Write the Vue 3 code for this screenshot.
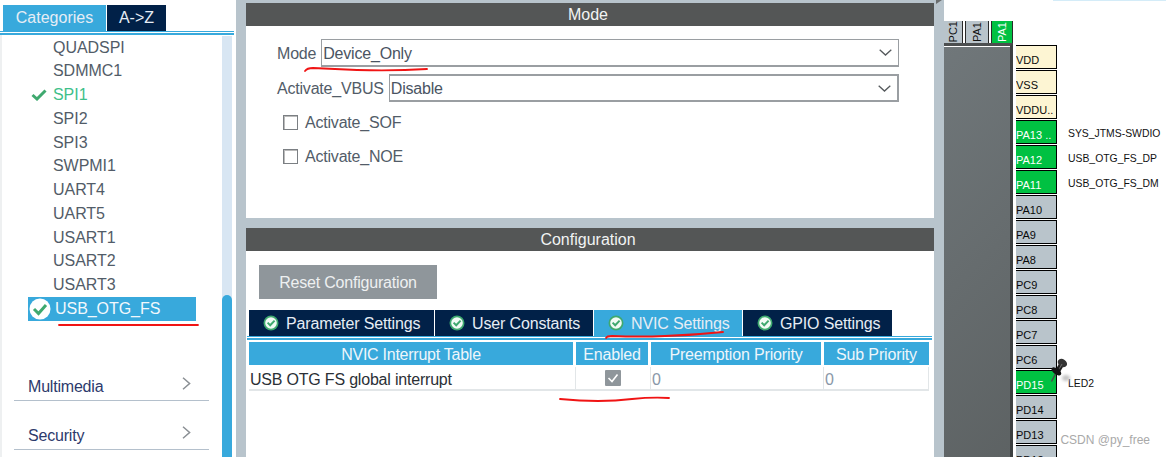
<script setup>
const items = [
  { name: 'QUADSPI' }, { name: 'SDMMC1' }, { name: 'SPI1', state: 'ok' }, { name: 'SPI2' }, { name: 'SPI3' },
  { name: 'SWPMI1' }, { name: 'UART4' }, { name: 'UART5' }, { name: 'USART1' }, { name: 'USART2' }, { name: 'USART3' },
]
const groups = ['Multimedia', 'Security']
const tabs = [
  { name: 'Parameter Settings', w: 185 },
  { name: 'User Constants', w: 158 },
  { name: 'NVIC Settings', w: 148, active: true },
  { name: 'GPIO Settings', w: 149 },
]
const topPins = [
  { name: 'PC1', w: 19 }, { name: 'PA1', w: 25 }, { name: 'PA1', w: 22, on: true },
]
const pins = [
  { n: 'VDD', k: 'pwr' }, { n: 'VSS', k: 'pwr' }, { n: 'VDDU..', k: 'pwr' },
  { n: 'PA13 ..', k: 'on', l: 'SYS_JTMS-SWDIO' }, { n: 'PA12', k: 'on', l: 'USB_OTG_FS_DP' }, { n: 'PA11', k: 'on', l: 'USB_OTG_FS_DM' },
  { n: 'PA10' }, { n: 'PA9' }, { n: 'PA8' }, { n: 'PC9' }, { n: 'PC8' }, { n: 'PC7' }, { n: 'PC6' },
  { n: 'PD15', k: 'on', l: 'LED2' }, { n: 'PD14' }, { n: 'PD13' }, { n: 'PD12', k: 'cut' },
]
</script>

<template>
  <div class="page">
    <aside class="side">
      <div class="side-tabs">
        <div class="stab active">Categories</div>
        <div class="stab">A-&gt;Z</div>
      </div>
      <div class="rule side-rule"></div>
      <div class="side-body">
        <div class="side-list">
          <div v-for="it in items" :key="it.name" class="item" :class="{ ok: it.state }">
            <svg v-if="it.state" class="tick" viewBox="0 0 16 12" width="16" height="12"><path d="M1.5 6 L6 10 L14.5 1.5" fill="none" stroke="#3fa96f" stroke-width="3"/></svg>
            {{ it.name }}
          </div>
          <div class="item selected">
            <svg class="sel-ico" viewBox="0 0 22 22" width="22" height="22"><circle cx="11" cy="11" r="10.5" fill="#fff"/><path d="M5 11 L9.5 15.5 L17 7" fill="none" stroke="#3fa96f" stroke-width="3"/></svg>
            <span>USB_OTG_FS</span>
          </div>
          <div v-for="g in groups" :key="g" class="group">
            <span>{{ g }}</span>
            <svg viewBox="0 0 9 13" width="9" height="13"><path d="M1 0.8 L7.6 6.5 L1 12.2" fill="none" stroke="#8a8f94" stroke-width="1.5"/></svg>
          </div>
        </div>
        <div class="scroll"><div class="thumb"></div></div>
      </div>
    </aside>

    <main class="center">
      <section class="panel mode">
        <header class="phead">Mode</header>
        <div class="mode-body">
          <div class="frow">
            <label>Mode</label>
            <div class="select thin"><span>Device_Only</span>
              <svg viewBox="0 0 13 7" width="13" height="7"><path d="M0.7 0.7 L6.5 6 L12.3 0.7" fill="none" stroke="#55595c" stroke-width="1.3"/></svg>
            </div>
          </div>
          <div class="frow">
            <label>Activate_VBUS</label>
            <div class="select"><span>Disable</span>
              <svg viewBox="0 0 13 7" width="13" height="7"><path d="M0.7 0.7 L6.5 6 L12.3 0.7" fill="none" stroke="#55595c" stroke-width="1.3"/></svg>
            </div>
          </div>
          <div class="checks">
            <div class="check"><i></i><span>Activate_SOF</span></div>
            <div class="check"><i></i><span>Activate_NOE</span></div>
          </div>
        </div>
      </section>

      <section class="panel config">
        <header class="phead">Configuration</header>
        <div class="config-body">
          <button class="reset">Reset Configuration</button>
          <div class="tabs">
            <div v-for="t in tabs" :key="t.name" class="tab" :class="{ active: t.active }" :style="{ width: t.w + 'px' }">
              <svg viewBox="0 0 16 16" width="16" height="16"><circle cx="8" cy="8" r="7.5" fill="#3fa96f"/><circle cx="8" cy="8" r="5.8" fill="#f2fbf5"/><path d="M4.6 7.6 L7.2 10.2 L11.6 5.6" fill="none" stroke="#3fa96f" stroke-width="2"/></svg>
              <span>{{ t.name }}</span>
            </div>
          </div>
          <div class="rule cfg-rule"></div>
          <div class="table">
            <div class="cell th wide">NVIC Interrupt Table</div>
            <div class="cell th">Enabled</div>
            <div class="cell th">Preemption Priority</div>
            <div class="cell th">Sub Priority</div>
            <div class="cell td name">USB OTG FS global interrupt</div>
            <div class="cell td mid"><span class="cb"><svg viewBox="0 0 16 16" width="16" height="16"><path d="M3.5 8 L7 11.5 L12.5 4.5" fill="none" stroke="#fff" stroke-width="1.6"/></svg></span></div>
            <div class="cell td num">0</div>
            <div class="cell td num last">0</div>
          </div>
        </div>
      </section>
    </main>

    <section class="canvas">
      <div class="top-pins">
        <div v-for="(p, i) in topPins" :key="i" class="tpin" :class="{ on: p.on }" :style="{ width: p.w + 'px' }"><span>{{ p.name }}</span></div>
      </div>
      <div class="chip-row">
        <div class="chip"></div>
        <div class="pins">
          <div v-for="p in pins" :key="p.n" class="pin-row">
            <div class="pin" :class="p.k">{{ p.n }}</div>
            <div v-if="p.l" class="pin-label">{{ p.l }}</div>
          </div>
        </div>
      </div>
      <svg class="pushpin" viewBox="0 0 26 26" width="26" height="26">
        <defs><filter id="soft" x="-60%" y="-60%" width="220%" height="220%"><feGaussianBlur stdDeviation="1.8"/></filter></defs>
        <ellipse cx="16" cy="20" rx="4" ry="3" fill="#c4c4c4" filter="url(#soft)"/>
        <path d="M1.5 23.5 L6 15" stroke="#4a4a4a" stroke-width="1.5"/>
        <path d="M11.5 6.5 L8 12.5" stroke="#1d1d1d" stroke-width="5"/>
        <ellipse cx="6.4" cy="13.4" rx="5.6" ry="3" transform="rotate(35 6.4 13.4)" fill="#141414"/>
        <ellipse cx="12.4" cy="5" rx="5" ry="3.8" transform="rotate(35 12.4 5)" fill="#333"/>
        <path d="M9.5 10.5 L12 6" stroke="#6f6f6f" stroke-width="1"/>
      </svg>
      <div class="mark">CSDN @py_free</div>
      <div class="top-line"></div>
    </section>

    <svg class="ink" viewBox="0 0 1166 457" width="1166" height="457">
      <polygon points="936,0 942,0 936,4" fill="#6a6d6e"/>
      <g fill="none" stroke="#f01414" stroke-width="1.8" stroke-linecap="round">
        <path d="M305 71 Q307 68 313 68 Q335 69 357 70 Q395 71 427 69"/>
        <path d="M59 325 L198 325"/>
        <path d="M606 338 Q607 336 612 336 Q640 337 665 336 Q695 335 723 332"/>
        <path d="M560 399 Q600 403 632 399 Q652 397 669 398"/>
      </g>
    </svg>
  </div>
</template>

<style>
html, body { margin: 0; background: #fff; overflow: hidden; }
</style>

<style scoped>
.page {
  position: relative;
  display: flex;
  width: 1166px;
  height: 457px;
  overflow: hidden;
  background: #fff;
  font-family: "Liberation Sans", Arial, sans-serif;
  font-size: 16px;
  letter-spacing: -0.2px;
  color: #525c68;
}
.side {
  width: 236px;
  flex: none;
  padding-top: 5px;
  box-sizing: border-box;
}
.side-tabs { display: flex; gap: 1px; padding-left: 3px; height: 26px; }
.stab {
  width: 59px;
  background: #012148;
  color: #e6edf5;
  font-size: 16px;
  letter-spacing: 0;
  line-height: 26px;
  text-align: center;
}
.stab.active { width: 103px; background: #38a9dc; }
.side-rule { margin-right: 2px; }
.rule {
  height: 4px;
  background: linear-gradient(#38a9dc 0 1px, #fff 1px 2px, #38a9dc 2px 4px);
}
.side-body { display: flex; height: 422px; overflow: hidden; border-left: 2px solid #eef0f1; }
.side-list { width: 220px; padding-top: 0.5px; flex: none; }
.item {
  position: relative;
  height: 23.75px;
  line-height: 23.75px;
  padding-left: 51px;
  font-size: 16px;
  letter-spacing: -0.05px;
  white-space: nowrap;
}
.item.ok { color: #3ec08a; }
.tick { position: absolute; left: 29px; top: 6px; }
.selected {
  display: flex;
  align-items: center;
  gap: 4px;
  width: 168px;
  height: 24px;
  margin-left: 26px;
  padding-left: 1px;
  box-sizing: border-box;
  background: #38a9dc;
  color: #f2f8fc;
}
.sel-ico { flex: none; }
.group {
  display: flex;
  justify-content: space-between;
  align-items: flex-start;
  width: 195px;
  height: 31px;
  margin-left: 12px;
  border-bottom: 1px solid #b4c0cc;
  padding: 8px 18px 0 14px;
  box-sizing: border-box;
  color: #2d3a6c;
  font-size: 16px;
  line-height: 18px;
  margin-top: 18px;
}
.group svg { margin-top: -1px; }
.selected + .group { margin-top: 49px; }
.scroll { width: 10px; background: #d8e6f3; padding-top: 259px; margin-top: 1px; }
.thumb { height: 170px; background: #38a9dc; border-radius: 5px 5px 0 0; }

.center {
  width: 708px;
  flex: none;
  box-sizing: border-box;
  padding: 3px 0 0;
  border-left: 10px solid #b8c4cc;
  border-right: 10px solid #b8c4cc;
  background: #b8c4cc;
  display: flex;
  flex-direction: column;
  gap: 10px;
}
.panel { background: #fff; }
.phead {
  height: 23px;
  padding-right: 4px;
  background: #545656;
  color: #f1f3f3;
  text-align: center;
  line-height: 23px;
  font-size: 16px;
  letter-spacing: 0;
}
.mode { height: 215px; }
.mode-body { padding: 13px 35px 0 31px; }
.frow { display: flex; align-items: stretch; gap: 5px; height: 28px; margin-bottom: 7px; }
.frow label { line-height: 30px; }
.select {
  flex: 1;
  display: flex;
  align-items: center;
  justify-content: space-between;
  padding: 0 6px 0 1px;
  border: 2px solid #9a9ea2;
  border-left-width: 1px;
  box-sizing: border-box;
  color: #4a5462;
}
.select span { padding-top: 2px; }
.select.thin { border-width: 1px; border-bottom-width: 2px; }
.checks { margin-top: -4px; }
.check { display: flex; align-items: center; gap: 7px; height: 34px; padding-left: 6px; }
.check span { padding-top: 2px; }
.check i {
  width: 15px;
  height: 15px;
  box-sizing: border-box;
  border: 1px solid #7b7f83;
  box-shadow: inset 1px 1px 0 #bbb;
  background: #fff;
}
.config { flex: 1; }
.config-body { padding: 14px 2px 0 1px; }
.reset {
  display: block;
  width: 178px;
  height: 34px;
  margin-left: 12px;
  border: 0;
  padding: 2px 0 0;
  background: #8f969b;
  color: #eef0f1;
  font: inherit;
  letter-spacing: -0.2px;
}
.tabs { display: flex; gap: 1px; margin: 11px 0 0 2px; }
.tab {
  display: flex;
  align-items: center;
  gap: 7px;
  height: 26px;
  padding-left: 14px;
  box-sizing: border-box;
  background: #012148;
  color: #e6edf5;
  letter-spacing: -0.15px;
  white-space: nowrap;
}
.tab span { padding-top: 2px; }
.tab.active { background: #38a9dc; }
.tab svg { flex: none; }
.table {
  display: grid;
  grid-template-columns: 324px 72px 170px 105px;
  grid-auto-rows: 23px;
  column-gap: 3px;
  row-gap: 2px;
  margin: 2px 0 0 2px;
  width: 680px;
}
.cell { line-height: 25px; white-space: nowrap; }
.th { background: #38a9dc; color: #eef6fb; text-align: center; letter-spacing: -0.15px; line-height: 25px; height: 23px; overflow: hidden; }
.th.wide { letter-spacing: -0.25px; }
.td { height: 24px; border-bottom: 2px solid #e2e6e8; box-sizing: border-box; margin-right: -3px; border-right: 1px solid #e2e6e8; }
.td.last { margin-right: 0; }
.name { color: #2b3036; padding-left: 1px; }
.mid { display: flex; align-items: center; justify-content: center; }
.cb { display: block; width: 16px; height: 16px; background: #8f969b; border-radius: 1px; }
.cb svg { display: block; }
.num { color: #8a97a8; padding-left: 1px; }

.canvas { position: relative; flex: 1; min-width: 0; padding-top: 21px; letter-spacing: 0; }
.top-line { position: absolute; left: 109px; right: 0; top: 0; height: 1px; background: #d4ecf8; }
.top-pins { display: flex; gap: 2px; height: 22px; width: 69px; }
.tpin {
  position: relative;
  box-sizing: border-box;
  border-left: 1px solid #2a2a2a;
  border-right: 1px solid #2a2a2a;
  background: #b9c4cb;
  font-size: 11px;
  color: #111;
}
.tpin:first-child { border-left: 0; }
.tpin.on { background: #00c142; color: #fff; }
.tpin span {
  position: absolute;
  left: 50%;
  bottom: 1px;
  writing-mode: vertical-rl;
  transform: translateX(-50%) rotate(180deg);
  white-space: nowrap;
}
.chip-row { display: flex; align-items: flex-start; }
.chip {
  width: 69px;
  height: 440px;
  flex: none;
  box-sizing: border-box;
  border-top: 3px solid #4c4f50;
  border-right: 3px solid #3d4041;
  background: linear-gradient(#fff, #fff) top/100% 1px no-repeat, linear-gradient(135deg, #70777a, #5c6162);
}
.pins { padding: 2px 0 0 3px; }
.pin-row { display: flex; align-items: center; height: 25px; }
.pin {
  width: 41px;
  height: 24px;
  margin-bottom: 1px;
  box-sizing: border-box;
  border: 1px solid #000;
  border-left: 0;
  padding: 8px 0 0 0;
  background: #b9c4cb;
  color: #0a0a0a;
  font-size: 11px;
  line-height: 13px;
  white-space: nowrap;
  overflow: hidden;
}
.pin.pwr { background: #fdf5d3; }
.pin.on { background: #00c142; color: #fff; }
.pin-label { margin-left: 11px; font-size: 10.4px; color: #111; white-space: nowrap; padding-top: 1px; }
.pushpin { position: absolute; left: 106px; top: 358px; }
.mark { position: absolute; right: 16px; top: 433px; font-size: 12px; line-height: 15px; color: #a9a9a9; }
.ink { position: absolute; left: 0; top: 0; pointer-events: none; }
</style>
